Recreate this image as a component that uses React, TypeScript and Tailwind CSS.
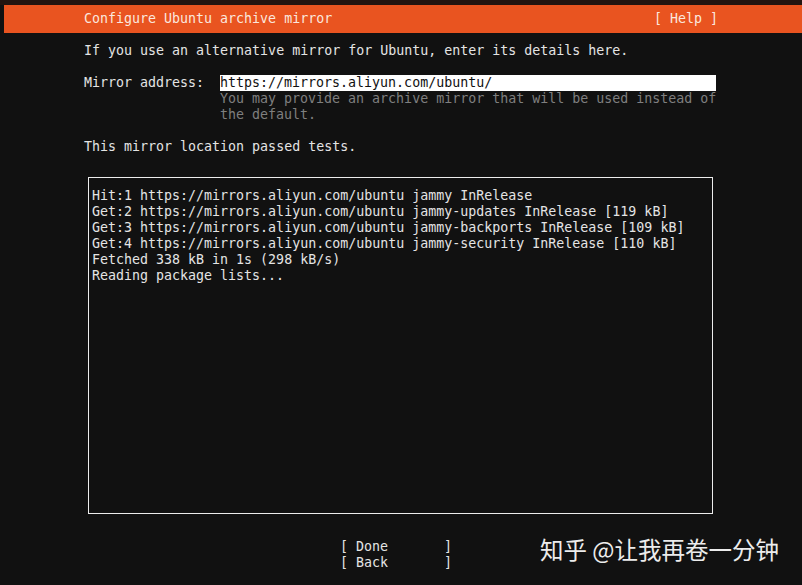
const mono = "font-['DejaVu_Sans_Mono','Liberation_Mono',monospace] text-[13.3px] leading-[16px]"

const logLines = [
  "Hit:1 https://mirrors.aliyun.com/ubuntu jammy InRelease",
  "Get:2 https://mirrors.aliyun.com/ubuntu jammy-updates InRelease [119 kB]",
  "Get:3 https://mirrors.aliyun.com/ubuntu jammy-backports InRelease [109 kB]",
  "Get:4 https://mirrors.aliyun.com/ubuntu jammy-security InRelease [110 kB]",
  "Fetched 338 kB in 1s (298 kB/s)",
  "Reading package lists...",
]

function Header() {
  return (
    <div className="ml-[4px] flex h-[28px] items-center bg-[#e95420] pl-[80px]">
      <div className="flex w-[634px] justify-between text-[#fbe7de]">
        <span>Configure Ubuntu archive mirror</span>
        <span className="whitespace-pre">[ Help ]</span>
      </div>
    </div>
  )
}

function MirrorForm() {
  return (
    <div className="ml-[84px] mt-[10px] w-[632px] whitespace-pre text-[#e4e4e4]">
      <p>If you use an alternative mirror for Ubuntu, enter its details here.</p>
      <div className="h-[16px]" />
      <div className="flex">
        <span className="w-[136px]">Mirror address:</span>
        <span className="w-[496px] bg-white text-[#111]">https://mirrors.aliyun.com/ubuntu/</span>
      </div>
      <div className="ml-[136px] text-[#7f7f7f]">
        <p>You may provide an archive mirror that will be used instead of</p>
        <p>the default.</p>
      </div>
      <div className="h-[16px]" />
      <p>This mirror location passed tests.</p>
    </div>
  )
}

function LogBox() {
  return (
    <div className="ml-[88px] mt-[22px] h-[337px] w-[625px] border border-[#ececec] pl-[3px] pt-[10px] text-[#e4e4e4]">
      {logLines.map((line) => (
        <p key={line} className="whitespace-pre">
          {line}
        </p>
      ))}
    </div>
  )
}

function Buttons() {
  return (
    <div className="ml-[340px] mt-[25px] text-[#e4e4e4]">
      <p className="whitespace-pre">{"[ Done       ]"}</p>
      <p className="whitespace-pre">{"[ Back       ]"}</p>
    </div>
  )
}

export default function App() {
  return (
    <div className={`relative h-[585px] w-[802px] overflow-hidden bg-[#111111] ${mono}`}>
      <div className="h-[5px] bg-[#231410]" />
      <Header />
      <MirrorForm />
      <LogBox />
      <Buttons />

      {/* watermark */}
      <div className="absolute left-[540px] top-[534px] font-['Noto_Sans_CJK_SC',sans-serif] text-[23.5px] leading-[30px] text-[#ececec]">
        知乎 @让我再卷一分钟
      </div>
    </div>
  )
}
